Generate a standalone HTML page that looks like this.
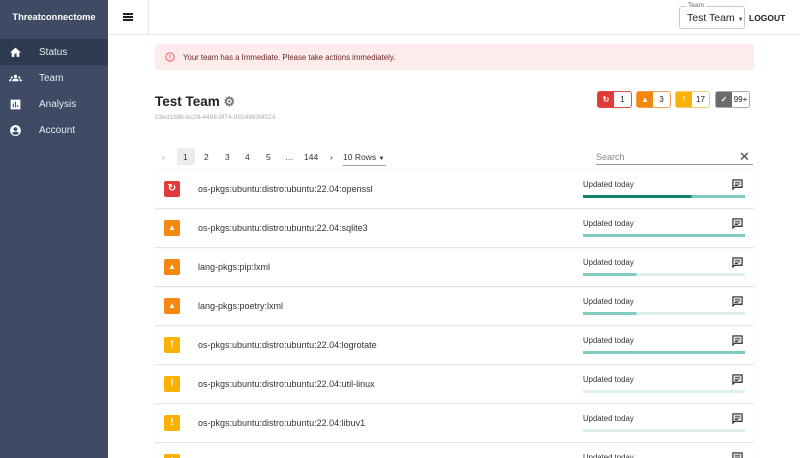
<!DOCTYPE html>
<html style="overflow:hidden;height:458px"><head><meta charset="utf-8"><style>
*{box-sizing:border-box;margin:0;padding:0}
body{width:800px;height:458px;overflow:hidden;font-family:"Liberation Sans",sans-serif;background:#fff;position:relative;color:#222}
.side{position:absolute;left:0;top:0;width:108px;height:458px;background:#3f4b64;color:#e8ebf0}
.brand{height:39px;line-height:35px;text-align:center;font-weight:bold;font-size:9.3px;color:#fff}
.nav{height:26px;display:flex;align-items:center;font-size:10px;color:#e5e8ee}
.nav.sel{background:#2f3b52}
.nav svg{margin-left:9px;width:13px;height:13px;fill:#fff}
.nav span{margin-left:17px}
.top{position:absolute;left:108px;top:0;right:0;height:35px;border-bottom:1px solid #e6e6e6}
.alert{position:absolute;left:155px;top:44px;width:599px;height:26px;background:#fdeceb;border-radius:3px;font-size:7.8px;color:#6b2626;display:flex;align-items:center}
.row{position:absolute;left:155px;width:599px;height:39px;border-bottom:1px solid #eaeaea;box-shadow:0 0 2px rgba(0,0,0,.08)}
.ic{position:absolute;left:9px;top:11px;width:16px;height:16px;border-radius:2px;color:#fff;font-weight:bold;font-size:10px;text-align:center;line-height:16px}
.name{position:absolute;left:43px;top:14px;font-size:9px;color:#333}
.upd{position:absolute;left:428px;top:10px;font-size:7.8px;color:#333}
.bar{position:absolute;left:428px;top:25px;width:162px;height:3px}
.cm{position:absolute;left:577px;top:9px;width:11px;height:11px}
.badge{position:absolute;top:91px;height:17px;border-radius:3px;display:flex;font-size:8px;background:#fff}
.badge .l{width:16px;height:100%;color:#fff;display:flex;align-items:center;justify-content:center;font-weight:bold}
.badge .r{flex:1;display:flex;align-items:center;justify-content:center;color:#222}
.pg{position:absolute;top:152px;font-size:8.5px;color:#333}
</style></head><body>
<div class="side">
<div class="brand">Threatconnectome</div>
<div class="nav sel"><svg viewBox="0 0 24 24"><path d="M10 20v-6h4v6h5v-8h3L12 3 2 12h3v8z"/></svg><span>Status</span></div>
<div class="nav"><svg viewBox="0 0 24 24"><circle cx="12" cy="8" r="3"/><circle cx="5" cy="10" r="2"/><circle cx="19" cy="10" r="2"/><path d="M6 17c0-3 3-5 6-5s6 2 6 5zM0 17c0-2 2-4 4-4l1 0c-1 1-1 3-1 4zM24 17c0-2-2-4-4-4l-1 0c1 1 1 3 1 4z"/></svg><span>Team</span></div>
<div class="nav"><svg viewBox="0 0 24 24"><path d="M3 3h18v18H3zM7 17h2v-7H7zm4 0h2V7h-2zm4 0h2v-4h-2z" fill-rule="evenodd"/></svg><span>Analysis</span></div>
<div class="nav"><svg viewBox="0 0 24 24"><path d="M12 2a10 10 0 100 20 10 10 0 000-20zm0 4a3.5 3.5 0 110 7 3.5 3.5 0 010-7zm0 14c-2.7 0-5-1.3-6.4-3.3C7 15 10 14 12 14s5 1 6.4 2.7C17 18.7 14.7 20 12 20z"/></svg><span>Account</span></div>
</div>
<div class="top">
<div style="position:absolute;left:40px;top:0;width:1px;height:35px;background:#e6e6e6"></div>
<div style="position:absolute;left:15px;top:13px;width:10px;height:1.5px;background:#222;box-shadow:0 3px 0 #222,0 6px 0 #222"></div>
<div style="position:absolute;left:571px;top:6px;width:66px;height:23px;border:1px solid #c8c8c8;border-radius:3px"></div>
<div style="position:absolute;left:578px;top:2px;font-size:6.5px;color:#666;background:#fff;padding:0 2px">Team</div>
<div style="position:absolute;left:579px;top:12px;font-size:10.5px;color:#222">Test Team <span style="font-size:6px;color:#555">▼</span></div>
<div style="position:absolute;left:641px;top:13px;font-size:8.5px;font-weight:bold;color:#222">LOGOUT</div>
</div>
<div class="alert"><svg style="margin-left:10px" width="10" height="10" viewBox="0 0 24 24"><circle cx="12" cy="12" r="10" fill="none" stroke="#e0494a" stroke-width="2"/><path d="M12 6v8M12 16v2" stroke="#e0494a" stroke-width="2"/></svg><span style="margin-left:8px">Your team has a Immediate. Please take actions immediately.</span></div>
<div style="position:absolute;left:155px;top:94px;font-size:13.5px;font-weight:bold;color:#222">Test Team <span style="color:#777;font-size:13px">⚙</span></div>
<div style="position:absolute;left:155px;top:114px;font-size:6.5px;color:#aaa">03ed158b-bc29-4498-9f74-9924983f4524</div>
<div class="badge" style="left:597px;width:35px;border:1px solid #e0494a"><div class="l" style="background:#e03a3a">↻</div><div class="r">1</div></div>
<div class="badge" style="left:636px;width:35px;border:1px solid #f0a050"><div class="l" style="background:#f5870f">▲</div><div class="r">3</div></div>
<div class="badge" style="left:675px;width:35px;border:1px solid #f5cc70"><div class="l" style="background:#fcb000">!</div><div class="r">17</div></div>
<div class="badge" style="left:715px;width:35px;border:1px solid #aaa"><div class="l" style="background:#6b6b6b">✓</div><div class="r">99+</div></div>
<div class="pg" style="left:162px;color:#aaa">‹</div>
<div style="position:absolute;left:177px;top:148px;width:18px;height:17px;background:#ececec;border-radius:2px"></div>
<div class="pg" style="left:183px">1</div><div class="pg" style="left:204px">2</div><div class="pg" style="left:225px">3</div><div class="pg" style="left:245px">4</div><div class="pg" style="left:266px">5</div><div class="pg" style="left:285px">…</div><div class="pg" style="left:304px">144</div><div class="pg" style="left:330px">›</div>
<div class="pg" style="left:343px">10 Rows <span style="font-size:6px">▼</span></div>
<div style="position:absolute;left:343px;top:165px;width:43px;height:1px;background:#999"></div>
<div style="position:absolute;left:596px;top:152px;font-size:9px;color:#888">Search</div>
<div style="position:absolute;left:739px;top:149px;font-size:13px;color:#444">✕</div>
<div style="position:absolute;left:596px;top:164px;width:157px;height:1px;background:#999"></div>
<div id="rows"></div>
<script>
var d=[["r","os-pkgs:ubuntu:distro:ubuntu:22.04:openssl",2],["o","os-pkgs:ubuntu:distro:ubuntu:22.04:sqlite3",1],["o","lang-pkgs:pip:lxml",3],["o","lang-pkgs:poetry:lxml",3],["y","os-pkgs:ubuntu:distro:ubuntu:22.04:logrotate",1],["y","os-pkgs:ubuntu:distro:ubuntu:22.04:util-linux",0],["y","os-pkgs:ubuntu:distro:ubuntu:22.04:libuv1",0],["y","",0]];
var h="";d.forEach(function(r,i){var t=170+i*39;var c=r[0]=="r"?"#e03a3a":r[0]=="o"?"#f5870f":"#fcb000";var g=r[0]=="r"?"↻":r[0]=="o"?"▲":"!";
var bar=r[2]==2?"linear-gradient(90deg,#12846f 67%,#7fcbc0 67%)":r[2]==1?"#7fcbc0":r[2]==3?"linear-gradient(90deg,#7fcbc0 33%,#dcf1ee 33%)":"#dcf1ee";
h+='<div class="row" style="top:'+t+'px"><div class="ic" style="background:'+c+';font-size:'+(r[0]=="o"?8:10)+'px">'+g+'</div><div class="name">'+r[1]+'</div><div class="upd">Updated today</div><div class="bar" style="background:'+bar+'"></div><svg class="cm" viewBox="0 0 24 24"><path d="M2 2h20v16H6l-4 4z" fill="none" stroke="#222" stroke-width="2.5"/><path d="M6 7h12M6 11h12M6 14h7" stroke="#222" stroke-width="2"/></svg></div>';});
document.getElementById("rows").innerHTML=h;
</script>
</body></html>
